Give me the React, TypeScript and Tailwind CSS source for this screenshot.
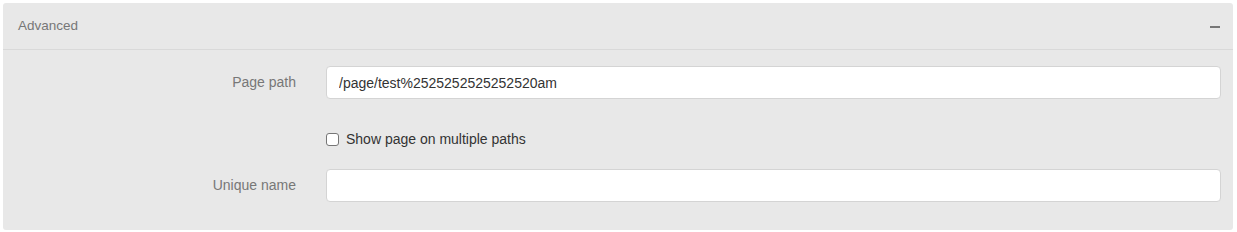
import React from "react";

export default function App() {
  return (
    <div className="bg-white w-[1237px] h-[232px] p-[3px] pr-[4px]" style={{ fontFamily: '"Liberation Sans", Arial, sans-serif' }}>
      <div className="bg-[#e8e8e8] rounded-[3px] h-[227px] flex flex-col">
        <div className="h-[47px] border-b border-[#d9d9d9] flex items-center justify-between pl-[15px] pr-[13px]">
          <span className="text-[13.5px] text-[#777777]">Advanced</span>
          <span className="w-[10px] h-[2px] bg-[#777777] mt-[1px]"></span>
        </div>
        <div className="pt-[16px] pr-[12px] flex flex-col">
          <div className="flex items-center">
            <label className="w-[293px] text-right text-[14px] text-[#777777]">Page path</label>
            <input
              readOnly
              value="/page/test%2525252525252520am"
              className="ml-[30px] flex-1 h-[33px] bg-white border border-[#d4d4d4] rounded-[4px] px-[12px] text-[14px] text-[#333333] outline-none"
              style={{ fontFamily: '"Liberation Sans", Arial, sans-serif' }}
            />
          </div>
          <div className="flex items-center mt-[33px] ml-[323px] h-[14px]">
            <span className="w-[13px] h-[13px] border border-[#767676] rounded-[3px] bg-white shrink-0"></span>
            <span className="ml-[7px] text-[14px] text-[#333333]">Show page on multiple paths</span>
          </div>
          <div className="flex items-center mt-[23px]">
            <label className="w-[293px] text-right text-[14px] text-[#777777]">Unique name</label>
            <input
              readOnly
              value=""
              className="ml-[30px] flex-1 h-[33px] bg-white border border-[#d4d4d4] rounded-[4px] px-[12px] text-[14px] text-[#333333] outline-none"
            />
          </div>
        </div>
      </div>
    </div>
  );
}
